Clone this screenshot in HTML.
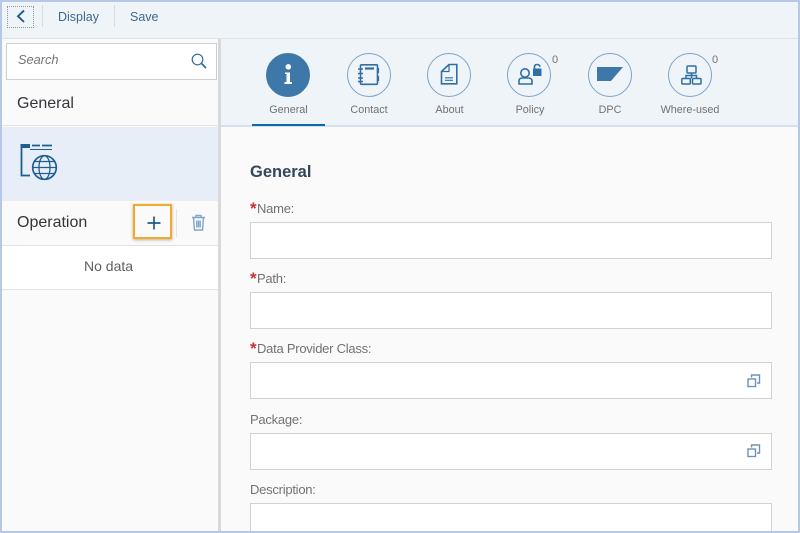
<!DOCTYPE html>
<html><head><meta charset="utf-8">
<style>
html,body{margin:0;padding:0;width:800px;height:533px;overflow:hidden;background:#fafafa}
body{font-family:"Liberation Sans",sans-serif}
#w{position:absolute;left:0;top:0;width:800px;height:533px;overflow:hidden;background:#fafafa}
#c{position:absolute;left:0;top:0;width:800px;height:533px;filter:blur(.3px)}
.a{position:absolute}
.t{position:absolute;white-space:nowrap}
.inp{position:absolute;left:250px;width:520px;height:35px;background:#fff;border:1px solid #d2d2d2}
.lbl{position:absolute;left:250px;font-size:13px;letter-spacing:-.25px;color:#6f7275;line-height:16px;white-space:nowrap}
.lbl b{display:inline-block;width:7px;font-size:17px;color:#c9303a;font-weight:bold;letter-spacing:0;line-height:14px;vertical-align:-1px}
.cir{position:absolute;top:53px;width:42px;height:42px;border:1px solid #7ba3c9;border-radius:50%}
.tab{position:absolute;top:103px;font-size:10.8px;line-height:14px;color:#6f7275;text-align:center;width:90px;white-space:nowrap}
.cnt{position:absolute;top:53px;font-size:11px;line-height:14px;color:#6f7275}
svg{position:absolute;overflow:visible}
</style></head><body>
<div id="w"><div id="c">
<div class="a" style="left:0;top:2px;width:800px;height:37px;background:#eff4f9;border-bottom:1px solid #dfe3e6;box-sizing:border-box"></div>
<div class="a" style="left:220px;top:39px;width:580px;height:87px;background:#eff4f9"></div>
<div class="a" style="left:220px;top:125px;width:580px;height:2px;background:#d5e1ee"></div>
<div class="a" style="left:252px;top:123.500px;width:73px;height:2px;background:#0a6ab0"></div>

<div class="a" style="left:7px;top:6px;width:25px;height:20px;border:1px dotted #8698aa"></div>
<svg style="left:0;top:0" width="40" height="30"><path d="M24 10.500 L18 16.200 L24 22" fill="none" stroke="#1e5a8c" stroke-width="1.900"/></svg>
<div class="a" style="left:42px;top:5px;width:1px;height:22px;background:#d6dbe0"></div>
<div class="a" style="left:114px;top:5px;width:1px;height:22px;background:#d6dbe0"></div>
<div class="t" style="left:58px;top:8.500px;font-size:12.500px;line-height:16px;color:#41688f">Display</div>
<div class="t" style="left:130px;top:8.500px;font-size:12.500px;line-height:16px;color:#41688f">Save</div>

<!-- left panel -->
<div class="a" style="left:2px;top:39px;width:216px;height:494px;background:#fafafa"></div>
<div class="a" style="left:218px;top:39px;width:3px;height:494px;background:#d9d9d9"></div>
<div class="a" style="left:6px;top:43px;width:209px;height:35px;background:#fff;border:1px solid #cfcfcf"></div>
<div class="t" style="left:18px;top:52px;font-size:12.800px;line-height:16px;font-style:italic;color:#74777a">Search</div>
<svg style="left:190px;top:52px" width="18" height="18"><circle cx="7.500" cy="7.500" r="5.300" fill="none" stroke="#2f6a9c" stroke-width="1.200"/><path d="M11.500 11.500 L16 16" stroke="#2f6a9c" stroke-width="1.700"/></svg>
<div class="t" style="left:17px;top:95px;font-size:16px;line-height:18px;color:#32363a">General</div>
<div class="a" style="left:2px;top:125px;width:216px;height:1px;background:#e3e3e3"></div>
<div class="a" style="left:2px;top:127px;width:216px;height:73px;background:#e7eef7"></div>
<div class="a" style="left:2px;top:200px;width:216px;height:1px;background:#eeeeee"></div>
<svg style="left:0;top:125px" width="70" height="60" fill="none" stroke="#1f5f90">
<path d="M20.500 19 H30 V23 H20.500 Z" fill="#1f5f90" stroke="none"/>
<path d="M32 20.500 H40 M42 20.500 H52" stroke-width="1.700"/>
<path d="M21.500 23 V50.500 H30" stroke-width="1.800"/>
<path d="M30 24.500 H52" stroke-width="1"/>
<circle cx="44.500" cy="42.500" r="11.800" stroke-width="1.700"/>
<ellipse cx="44.500" cy="42.500" rx="5.500" ry="11.800" stroke-width="1.300"/>
<path d="M33 42.500 H56 M35 36.500 H54 M35 48.500 H54" stroke-width="1.300"/>
</svg>
<div class="t" style="left:17px;top:214px;font-size:16px;line-height:18px;color:#32363a">Operation</div>
<div class="a" style="left:133px;top:204px;width:35px;height:31px;border:2px solid #f0ab2c;box-shadow:0 1px 3px rgba(90,70,20,.4)"></div>
<svg style="left:146px;top:215px" width="16" height="16"><path d="M8 1.500 V14.500 M1.500 8 H14.500" stroke="#1f5a8c" stroke-width="1.700"/></svg>
<div class="a" style="left:176px;top:209px;width:1px;height:28px;background:#e3e3e3"></div>
<svg style="left:191px;top:214px" width="16" height="18" fill="none" stroke="#7fa6c8" stroke-width="1.400"><path d="M1 3.500 H14 M5 3.500 V1.500 H10 V3.500 M2.500 3.500 L3.500 16 H11.500 L12.500 3.500 M5.800 6.500 V13.500 M7.500 6.500 V13.500 M9.200 6.500 V13.500"/></svg>
<div class="a" style="left:2px;top:245px;width:216px;height:1px;background:#e3e3e3"></div>
<div class="a" style="left:2px;top:246px;width:216px;height:43px;background:#fff;border-bottom:1px solid #e3e3e3"></div>
<div class="t" style="left:84px;top:258px;font-size:14px;line-height:17px;color:#5e6164">No data</div>

<!-- tabs -->
<div class="cir" style="left:266px;background:#3e78a9;border-color:#3e78a9"></div>
<svg style="left:266px;top:53px" width="44" height="44" fill="#fff"><circle cx="22.300" cy="13.800" r="2.800"/><path d="M19 19.500 H24 V29 H26 V31 H18.500 V29 H20.500 V21 H19 Z"/></svg>
<div class="cir" style="left:347px"></div>
<svg style="left:347px;top:53px" width="44" height="44" fill="none" stroke="#2f6fa3" stroke-width="1.600"><rect x="13.500" y="11.800" width="17" height="19.500" rx="1"/><path d="M18 15.500 H27" stroke-width="2.200"/><path d="M11 16 H16 M11 20.500 H16 M11 25 H16 M11 28.500 H16" stroke-width="1.400"/><path d="M31 15 V20 M31 23 V28" stroke-width="2.200"/></svg>
<div class="cir" style="left:427px"></div>
<svg style="left:427px;top:53px" width="44" height="44" fill="none" stroke="#2f6fa3" stroke-width="1.600"><path d="M22 11.500 H29.800 V30.800 H14.500 V18.500 Z"/><path d="M22 11.500 V18.500 H14.500" stroke-width="1.200"/><path d="M18 24.800 H26 M18 27.300 H26" stroke-width="1.200"/></svg>
<div class="cir" style="left:507px"></div>
<svg style="left:507px;top:53px" width="44" height="44" fill="none" stroke="#2f6fa3" stroke-width="1.600"><circle cx="18" cy="20" r="4.200"/><path d="M12 31 V28 Q12 25 15.500 25 H21 Q25 25 25 28 V31 Z"/><rect x="26" y="15.500" width="8.500" height="7.500" fill="#2f6fa3" stroke="none"/><path d="M27.500 16 V13.800 Q27.500 11.500 30 11.500 Q32.500 11.500 33 13.800"/></svg>
<div class="cnt" style="left:552px">0</div>
<div class="cir" style="left:588px"></div>
<svg style="left:588px;top:53px" width="44" height="44"><path d="M9 14 H35 L23 28 H9 Z" fill="#3e78a9"/></svg>
<div class="cir" style="left:668px"></div>
<svg style="left:668px;top:53px" width="44" height="44" fill="none" stroke="#2f6fa3" stroke-width="1.500"><rect x="19" y="13" width="9" height="7" rx="1"/><rect x="13.800" y="25.500" width="8.500" height="5.500" rx="1"/><rect x="24.500" y="25.500" width="8.500" height="5.500" rx="1"/><path d="M23.500 20 V25.500 M18 25.500 V22.500 H28.500 V25.500"/></svg>
<div class="cnt" style="left:712px">0</div>
<div class="tab" style="left:243.500px">General</div>
<div class="tab" style="left:324px">Contact</div>
<div class="tab" style="left:404.500px">About</div>
<div class="tab" style="left:485px">Policy</div>
<div class="tab" style="left:565px">DPC</div>
<div class="tab" style="left:645px">Where-used</div>

<!-- form -->
<div class="t" style="left:250px;top:162px;font-size:16.500px;line-height:20px;font-weight:bold;color:#32475c">General</div>
<div class="lbl" style="top:201px"><b>*</b>Name:</div>
<div class="inp" style="top:222px"></div>
<div class="lbl" style="top:271px"><b>*</b>Path:</div>
<div class="inp" style="top:292px"></div>
<div class="lbl" style="top:341px"><b>*</b>Data Provider Class:</div>
<div class="inp" style="top:362px"></div>
<div class="lbl" style="top:412px">Package:</div>
<div class="inp" style="top:433px"></div>
<div class="lbl" style="top:482px">Description:</div>
<div class="inp" style="top:503px"></div>
<svg style="left:747px;top:374px" width="14" height="14" fill="none" stroke="#6f92b3" stroke-width="1.400"><rect x="1" y="5" width="7.500" height="7.500"/><path d="M4.500 3.500 V1 H12.500 V9 H10"/></svg>
<svg style="left:747px;top:444px" width="14" height="14" fill="none" stroke="#6f92b3" stroke-width="1.400"><rect x="1" y="5" width="7.500" height="7.500"/><path d="M4.500 3.500 V1 H12.500 V9 H10"/></svg>
</div>
<!-- outer frame -->
<div class="a" style="left:0;top:0;width:800px;height:533px;box-sizing:border-box;border:2px solid #b5c9e6;pointer-events:none"></div>
</div>
</body></html>
